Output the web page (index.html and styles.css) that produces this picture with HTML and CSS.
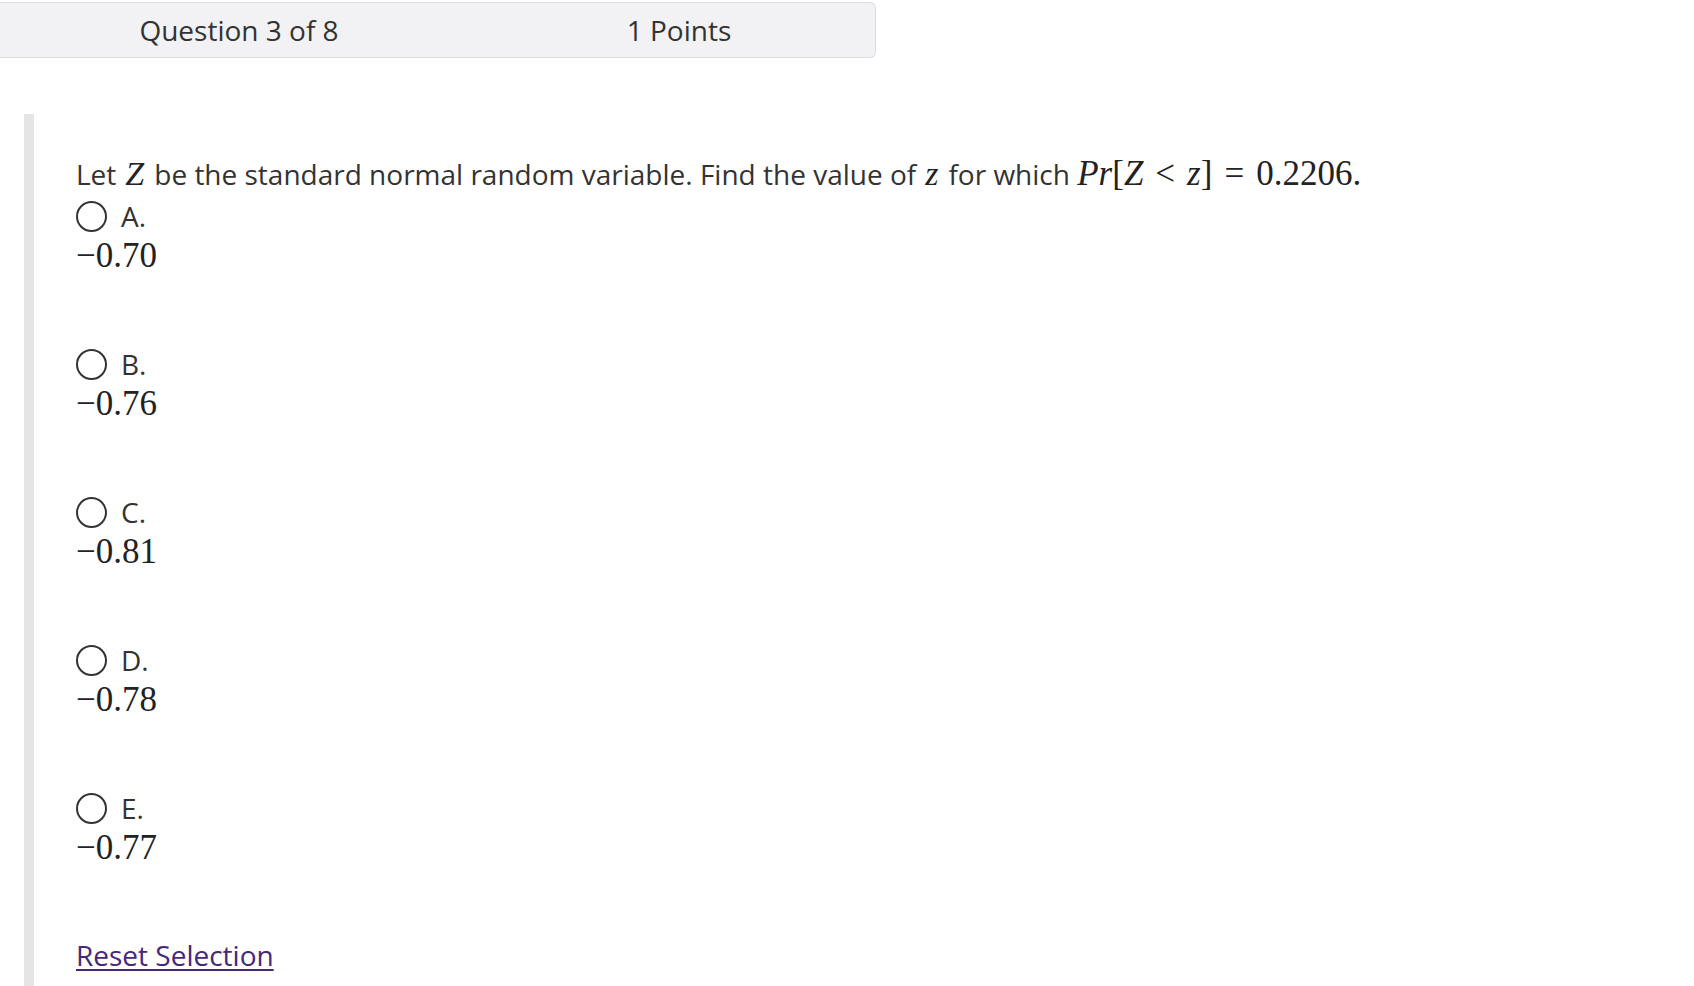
FILE: index.html
```html
<!DOCTYPE html>
<html lang="en">
<head>
<meta charset="utf-8">
<title>Question 3 of 8</title>
<link rel="stylesheet" href="styles.css">
</head>
<body>
<div class="qheader">
  <span class="qh-col">Question 3 of 8</span>
  <span class="qh-col">1 Points</span>
</div>
<div class="qbody">
  <p class="qtext">Let<span class="math var-inline"><i>Z</i></span>be the standard normal random variable. Find the value of<span class="math var-inline"><i>z</i></span>for which <span class="math expr"><i>P</i><i>r</i>[<i>Z</i><span class="op">&lt;</span><i>z</i>]<span class="op">=</span>0.2206.</span></p>
  <div class="options">
    <div class="option">
      <div class="opt-head"><span class="radio"></span><span class="letter">A.</span></div>
      <div class="opt-val">−0.70</div>
    </div>
    <div class="option">
      <div class="opt-head"><span class="radio"></span><span class="letter">B.</span></div>
      <div class="opt-val">−0.76</div>
    </div>
    <div class="option">
      <div class="opt-head"><span class="radio"></span><span class="letter">C.</span></div>
      <div class="opt-val">−0.81</div>
    </div>
    <div class="option">
      <div class="opt-head"><span class="radio"></span><span class="letter">D.</span></div>
      <div class="opt-val">−0.78</div>
    </div>
    <div class="option">
      <div class="opt-head"><span class="radio"></span><span class="letter">E.</span></div>
      <div class="opt-val">−0.77</div>
    </div>
  </div>
  <a class="reset" href="#">Reset Selection</a>
</div>
</body>
</html>
```
FILE: styles.css
```css
html, body {
  margin: 0;
  padding: 0;
  background: #ffffff;
}
html {
  overflow: hidden;
}
body {
  font-family: "Open Sans", "Noto Sans", sans-serif;
  color: #333333;
  height: 986px;
  overflow: hidden;
}
.qheader {
  margin-top: 2px;
  width: 856px;
  height: 54px;
  box-sizing: content-box;
  background: #f2f2f4;
  border: 1px solid #dcdcdf;
  border-left: none;
  border-radius: 0 6px 6px 0;
  display: flex;
  align-items: center;
  padding-left: 19px;
  font-size: 28px;
  color: #333;
}
.qh-col {
  width: 440px;
  flex: none;
  text-align: center;
  white-space: nowrap;
}
.qbody {
  margin-top: 56px;
  margin-left: 24px;
  border-left: 10px solid #e4e5e7;
  padding-left: 42px;
  padding-top: 41px;
  height: 831px;
}
.qtext {
  margin: 0;
  font-size: 28px;
  line-height: 38px;
  white-space: nowrap;
}
.math {
  font-family: "Liberation Serif", "Times New Roman", serif;
  font-size: 34px;
  line-height: 1;
  color: #222;
}
.math.expr {
  font-size: 35px;
}
.var-inline {
  margin: 0 10px 0 9px;
}
.math i {
  font-style: italic;
}
.math .op {
  margin: 0 12px;
}
.options {
  margin-top: 6px;
}
.option {
  margin-bottom: 71px;
}
.opt-head {
  display: flex;
  align-items: center;
  height: 34px;
  font-size: 28px;
  line-height: 34px;
}
.radio {
  width: 27px;
  height: 27px;
  border: 2px solid #333;
  border-radius: 50%;
  flex: none;
}
.letter {
  margin-left: 14px;
}
.opt-val {
  margin-top: 3px;
  font-family: "Liberation Serif", "Times New Roman", serif;
  font-size: 35px;
  line-height: 40px;
  color: #222;
}
.reset {
  display: inline-block;
  margin-top: -3px;
  font-size: 28px;
  line-height: 38px;
  color: #46287a;
  text-decoration: underline;
  text-underline-offset: 3px;
}
```
